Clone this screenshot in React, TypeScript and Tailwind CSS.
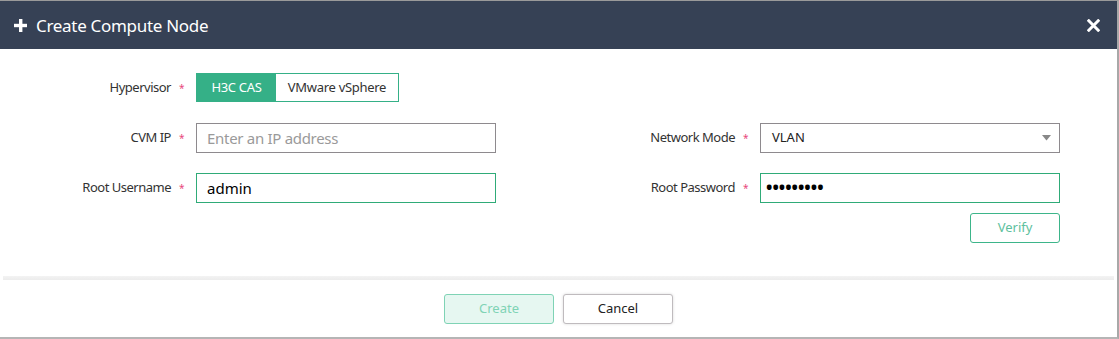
const font = { fontFamily: '"Noto Sans", "Liberation Sans", sans-serif' };

function Req() {
  return <span className="ml-[8px] text-[10px] text-[#e8497b] leading-none">*</span>;
}

function Label({ text, width }: { text: string; width: string }) {
  return (
    <div className={`${width} shrink-0 flex items-center justify-end pr-[12px] text-[13px] text-[#333] tracking-[-0.5px]`}>
      <span>{text}</span>
      <Req />
    </div>
  );
}

export default function App() {
  return (
    <div
      className="w-[1119px] h-[339px] bg-white border-t border-t-[#9a9a9a] border-r-2 border-r-[#a8a8a8] border-b-2 border-b-[#b5b5b5] flex flex-col overflow-hidden"
      style={font}
    >
      {/* Header */}
      <div className="h-[48px] shrink-0 bg-[#364155] flex items-center justify-between pl-[14px] pr-[17px]">
        <div className="flex items-center gap-[9px]">
          <svg width="13" height="13" viewBox="0 0 13 13" fill="white">
            <rect x="5" y="0" width="3.4" height="13" />
            <rect x="0" y="4.8" width="13" height="3.4" />
          </svg>
          <span className="text-[17px] text-white leading-none tracking-[-0.3px]">Create Compute Node</span>
        </div>
        <svg width="13" height="13" viewBox="0 0 13 13" stroke="white" strokeWidth="3" strokeLinecap="square">
          <path d="M1.8 1.8 L11.2 11.2 M11.2 1.8 L1.8 11.2" />
        </svg>
      </div>

      {/* Form */}
      <div className="pt-[24px] flex flex-col">
        <div className="flex h-[29px]">
          <Label text="Hypervisor" width="w-[196px]" />
          <div className="flex h-[29px] border border-[#35b087] text-[13px] tracking-[-0.3px]">
            <button className="w-[79px] bg-[#35b087] text-white">H3C CAS</button>
            <button className="w-[122px] bg-white text-[#333]">VMware vSphere</button>
          </div>
        </div>

        <div className="flex mt-[21px] h-[30px]">
          <Label text="CVM IP" width="w-[196px]" />
          <div className="w-[300px] h-[30px] border border-[#8e8a8e] flex items-center px-[10px] text-[15px] text-[#9a9a9a] tracking-[-0.3px]">
            Enter an IP address
          </div>
          <Label text="Network Mode" width="w-[264px]" />
          <div className="w-[300px] h-[30px] border border-[#8e8a8e] flex items-center justify-between pl-[11px] pr-[8px] text-[13px] text-[#222]">
            <span>VLAN</span>
            <svg width="9" height="6" viewBox="0 0 9 6" fill="#888">
              <path d="M0 0 L9 0 L4.5 5.5 Z" />
            </svg>
          </div>
        </div>

        <div className="flex mt-[20px] h-[30px]">
          <Label text="Root Username" width="w-[196px]" />
          <div className="w-[300px] h-[30px] border border-[#2fab78] flex items-center px-[10px] text-[15px] text-black">
            admin
          </div>
          <Label text="Root Password" width="w-[264px]" />
          <div className="w-[300px] h-[30px] border border-[#2fab78] flex items-center px-[5px] text-[17px] font-bold text-black">
            •••••••••
          </div>
        </div>

        <div className="flex justify-end mt-[10px] pr-[57px]">
          <button className="w-[90px] h-[30px] rounded-[3px] border border-[#3db58a] text-[13px] text-[#5ec19e] bg-white">
            Verify
          </button>
        </div>
      </div>

      {/* Separator */}
      <div className="mt-[33px] mx-[3px] h-[4px] bg-gradient-to-b from-[#f3f3f3] to-[#ececec]" />

      {/* Footer */}
      <div className="flex justify-center gap-[9px] mt-[14px]">
        <button className="w-[110px] h-[30px] rounded-[3px] border border-[#7fd3b5] bg-[#e6f7f1] text-[13px] text-[#7fd3b5]">
          Create
        </button>
        <button className="w-[110px] h-[30px] rounded-[3px] border border-[#bfbbbe] bg-white text-[13px] text-[#222] shadow-[0_0_3px_rgba(0,0,0,0.15)]">
          Cancel
        </button>
      </div>
    </div>
  );
}
